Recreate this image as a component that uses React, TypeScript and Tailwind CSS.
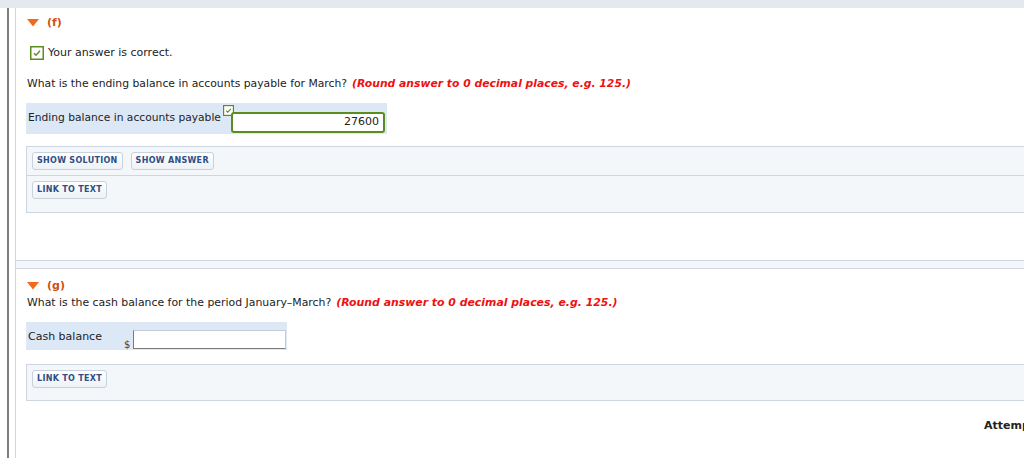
import React from "react";

const Tri = () => (
  <svg width="12" height="8" viewBox="0 0 12 8" className="block">
    <polygon points="0,0 12,0 6,7.5" fill="#f26a1b" />
  </svg>
);

const Check = ({ size }: { size: number }) => (
  <svg width={size} height={size} viewBox="0 0 14 14" className="block">
    <rect x="0.75" y="0.75" width="12.5" height="12.5" fill="#fff" stroke="#5b8d1e" strokeWidth="1.5" />
    <polyline points="4,7.2 6,9.2 10,4.8" fill="none" stroke="#5b8d1e" strokeWidth="1.4" />
  </svg>
);

const Btn = ({ children }: { children: React.ReactNode }) => (
  <div className="h-[18px] px-[4px] flex items-center rounded-[3px] border border-[#c9d1dc] bg-gradient-to-b from-[#ffffff] to-[#eef2f6] text-[8px] font-bold text-[#2d4e86] tracking-[0.3px] leading-none">
    {children}
  </div>
);

export default function App() {
  return (
    <div
      className="w-[1024px] h-[458px] overflow-hidden bg-white text-[#222] flex flex-col"
      style={{ fontFamily: '"DejaVu Sans", Verdana, sans-serif' }}
    >
      <div className="h-[8px] bg-[#e4e9ef] shrink-0" />
      <div className="flex flex-1 min-h-0">
        <div className="w-[7px] shrink-0 bg-white" />
        <div className="w-[2px] shrink-0 bg-[#7d7d7d]" />
        <div className="w-[6px] shrink-0 bg-white" />
        <div className="w-[1040px] shrink-0 border-l border-[#cdd6e1] bg-[#f4f7fa] flex flex-col">
          {/* Panel f */}
          <div className="bg-white h-[253px] border-b border-[#cdd6e1] pl-[10px] shrink-0">
            <div className="flex items-center h-[14px] mt-[8px] pl-[1px]">
              <Tri />
              <span className="ml-[8px] text-[11px] font-bold text-[#cc5210]">(f)</span>
            </div>
            <div className="flex items-center mt-[16px] pl-[4px] h-[14px]">
              <Check size={14} />
              <span className="ml-[4px] text-[11px]">Your answer is correct.</span>
            </div>
            <div className="mt-[17px] h-[14px] flex items-center pl-[1px] text-[10.8px] whitespace-nowrap">
              <span>What is the ending balance in accounts payable for March?</span>
              <span className="ml-[5px] font-bold italic text-[#ee1111]">(Round answer to 0 decimal places, e.g. 125.)</span>
            </div>
            <div className="mt-[12px] w-[361px] h-[31px] bg-[#dde8f7] flex items-center pl-[2px] relative">
              <span className="text-[10.7px] whitespace-nowrap">Ending balance in accounts payable</span>
              <div className="absolute left-[197px] top-[2px]">
                <Check size={11} />
              </div>
              <div className="absolute left-[205px] top-[9px] w-[154px] h-[21px] rounded-[3px] border-2 border-[#5b8d1e] bg-white flex items-center justify-end pr-[4px] text-[11px]">
                27600
              </div>
            </div>
            <div className="mt-[12px] h-[67px] border border-[#cdd6e1] bg-[#f4f7fa] flex flex-col">
              <div className="h-[29px] border-b border-[#cdd6e1] flex items-center gap-[8px] pl-[5px]">
                <Btn>SHOW SOLUTION</Btn>
                <Btn>SHOW ANSWER</Btn>
              </div>
              <div className="flex pl-[5px] pt-[5px]">
                <Btn>LINK TO TEXT</Btn>
              </div>
            </div>
          </div>
          <div className="h-[7px] shrink-0" />
          {/* Panel g */}
          <div className="bg-white flex-1 border-t border-[#cdd6e1] pl-[10px] relative">
            <div className="flex items-center h-[14px] mt-[10px] pl-[1px]">
              <Tri />
              <span className="ml-[8px] text-[11px] font-bold text-[#cc5210]">(g)</span>
            </div>
            <div className="mt-[3px] h-[14px] flex items-center pl-[1px] text-[10.9px] whitespace-nowrap">
              <span>What is the cash balance for the period January–March?</span>
              <span className="ml-[5px] font-bold italic text-[#ee1111]">(Round answer to 0 decimal places, e.g. 125.)</span>
            </div>
            <div className="mt-[12px] w-[261px] h-[28px] bg-[#dde8f7] flex pl-[2px] relative">
              <span className="text-[11px] mt-[7px]">Cash balance</span>
              <span className="absolute left-[98px] top-[15px] text-[10px] text-[#444]">$</span>
              <div className="absolute left-[107px] top-[8px] w-[153px] h-[19px] bg-white border border-[#c6ccd4] border-b-[#7a7a7a] border-l-[#7a7a7a]" />
            </div>
            <div className="mt-[14px] h-[37px] border border-[#cdd6e1] bg-[#f4f7fa] flex pl-[5px] pt-[5px]">
              <Btn>LINK TO TEXT</Btn>
            </div>
            <div className="absolute left-[968px] top-[149px] text-[11px] font-bold whitespace-nowrap">Attempts</div>
          </div>
        </div>
      </div>
    </div>
  );
}
